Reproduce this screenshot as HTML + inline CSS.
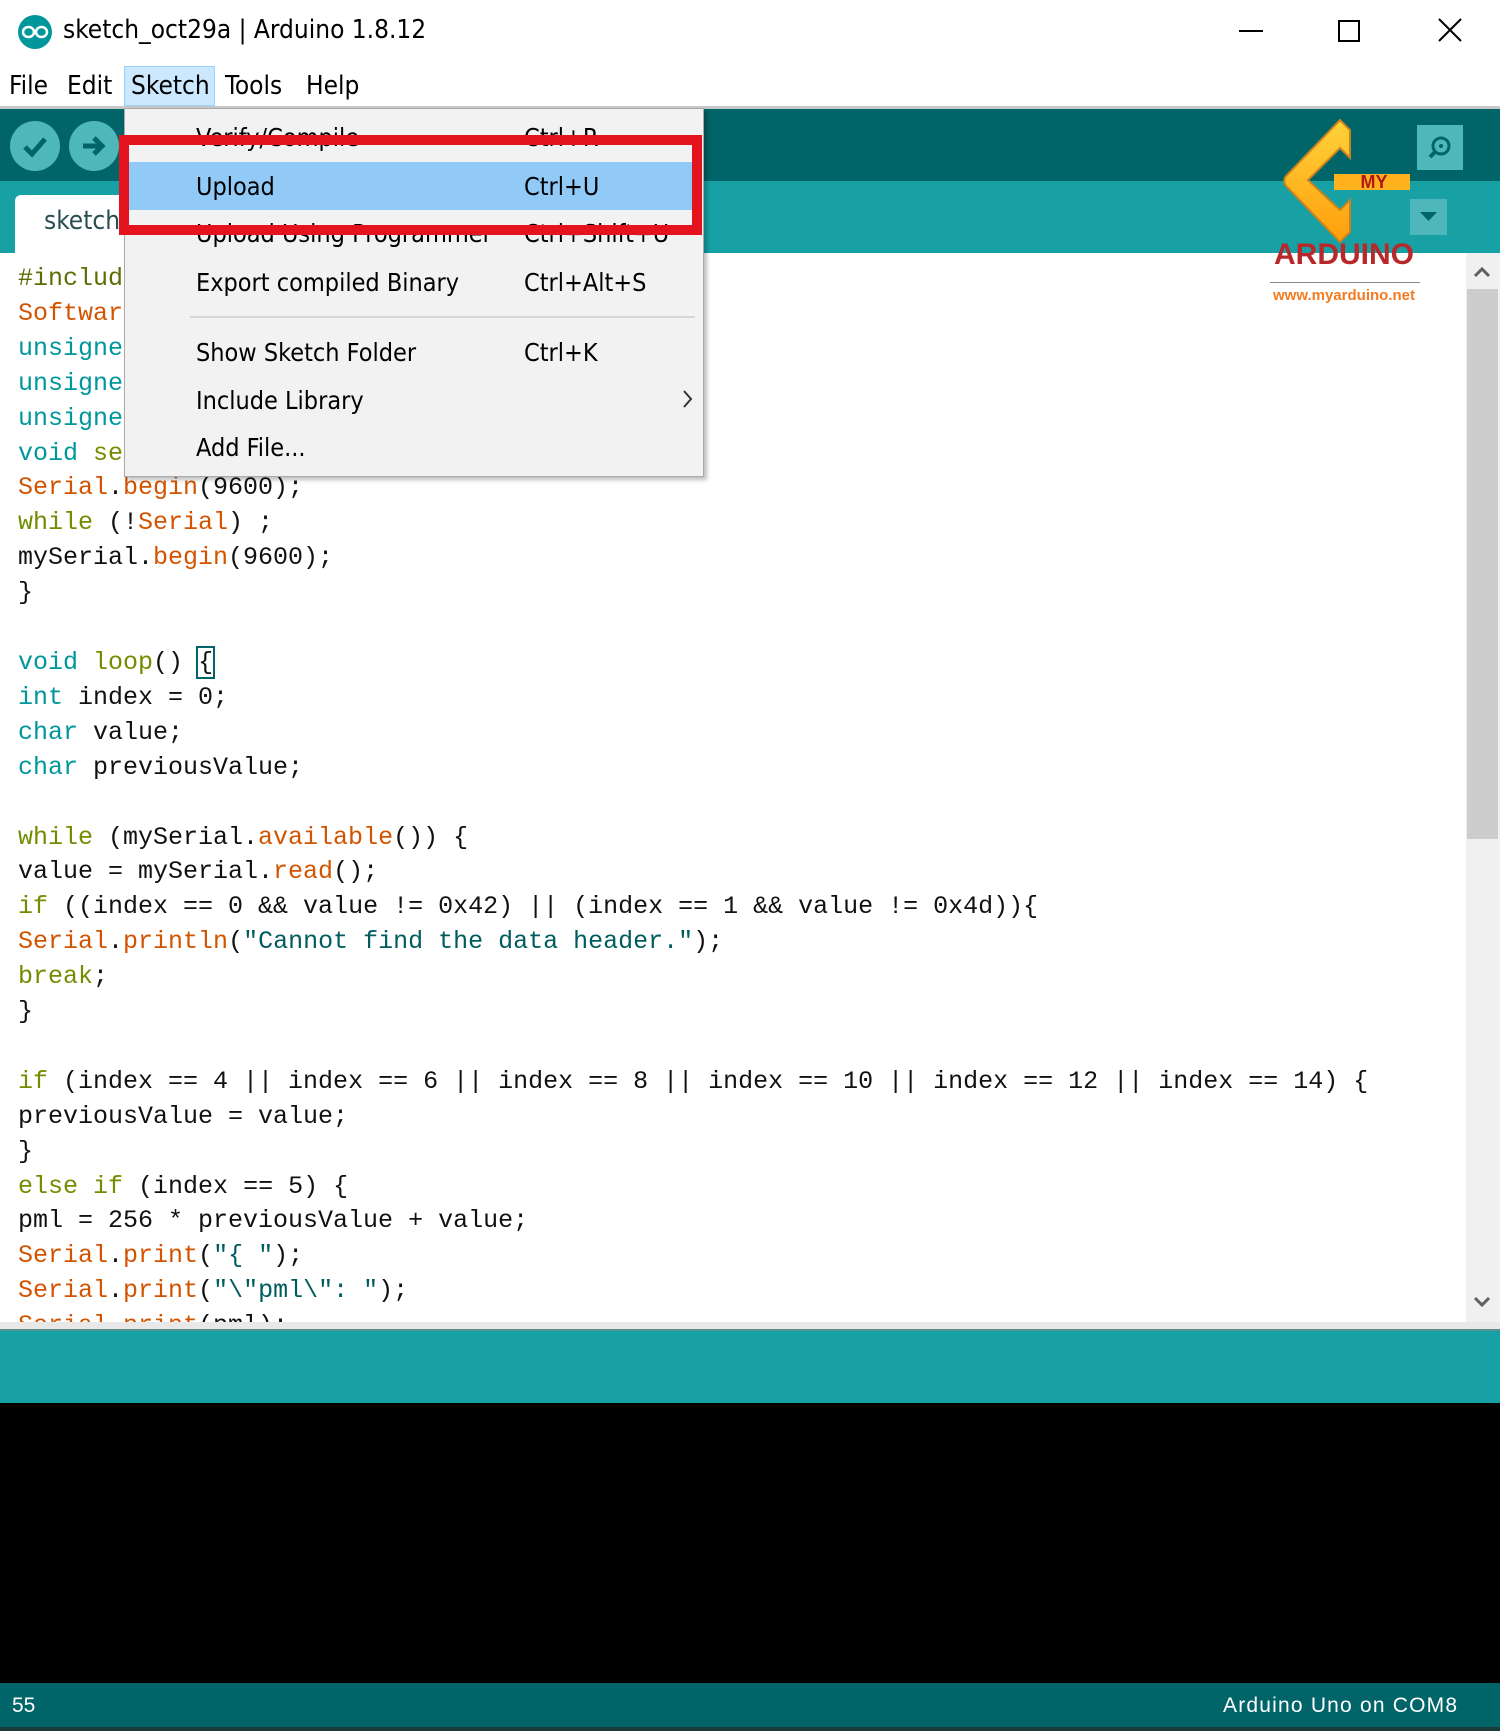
<!DOCTYPE html>
<html><head><meta charset="utf-8"><style>
*{margin:0;padding:0;box-sizing:border-box}
body{width:1500px;height:1731px;position:relative;overflow:hidden;background:#fff;font-family:"Liberation Sans",sans-serif}
.abs{position:absolute}
.ui{font-family:"DejaVu Sans Condensed","Liberation Sans",sans-serif;color:#000}
#code{position:absolute;left:18px;font-family:"Liberation Mono",monospace;font-size:25px;line-height:34.9px;white-space:pre;color:#111}
.k{color:#00979C}.f{color:#D35400}.c{color:#728E00}.p{color:#5E6D03}.s{color:#005C5F}
.mi{position:absolute;left:196px;font-size:25px;font-family:"DejaVu Sans Condensed","Liberation Sans",sans-serif;color:#000}
.sc{position:absolute;left:524px;font-size:25px;font-family:"DejaVu Sans Condensed","Liberation Sans",sans-serif;color:#000}
.mb{position:absolute;top:71px;font-size:26px}
</style></head><body>
<!-- title bar -->
<svg class="abs" style="left:17px;top:14px" width="36" height="36" viewBox="0 0 36 36"><circle cx="18" cy="18" r="17" fill="#00979C"/><ellipse cx="11.5" cy="18" rx="5.5" ry="5" fill="none" stroke="#fff" stroke-width="2.5"/><ellipse cx="24.5" cy="18" rx="5.5" ry="5" fill="none" stroke="#fff" stroke-width="2.5"/></svg>
<div class="abs ui" style="left:63px;top:15px;font-size:26px">sketch_oct29a | Arduino 1.8.12</div>
<div class="abs" style="left:1239px;top:30px;width:24px;height:2px;background:#000"></div>
<div class="abs" style="left:1338px;top:20px;width:22px;height:22px;border:2px solid #000"></div>
<svg class="abs" style="left:1438px;top:18px" width="24" height="24"><path d="M1 1L23 23M23 1L1 23" stroke="#000" stroke-width="2"/></svg>
<!-- menu bar -->
<div class="abs" style="left:124px;top:66px;width:91px;height:40px;background:#cce8ff;border:1px solid #99d1ff"></div>
<div class="mb ui" style="left:9px">File</div>
<div class="mb ui" style="left:67px">Edit</div>
<div class="mb ui" style="left:131px">Sketch</div>
<div class="mb ui" style="left:225px">Tools</div>
<div class="mb ui" style="left:306px">Help</div>
<div class="abs" style="left:0;top:106px;width:1500px;height:3px;background:#c8c8c8"></div>
<!-- toolbar -->
<div class="abs" style="left:0;top:109px;width:1500px;height:72px;background:#006468"></div>
<div class="abs" style="left:10px;top:121px;width:50px;height:50px;border-radius:50%;background:#4db7bb"></div>
<svg class="abs" style="left:10px;top:121px" width="50" height="50"><path d="M15 26l7 7 13-15" stroke="#006468" stroke-width="5" fill="none"/></svg>
<div class="abs" style="left:69px;top:121px;width:50px;height:50px;border-radius:50%;background:#4db7bb"></div>
<svg class="abs" style="left:69px;top:121px" width="50" height="50"><path d="M14 25h18M25 17l8 8-8 8" stroke="#006468" stroke-width="5" fill="none"/></svg>
<div class="abs" style="left:1417px;top:125px;width:46px;height:45px;background:#4db7bb"></div>
<svg class="abs" style="left:1417px;top:125px" width="46" height="45"><circle cx="24" cy="21" r="8" fill="none" stroke="#006468" stroke-width="3"/><circle cx="24" cy="21" r="2" fill="#006468"/><path d="M18 27l-5 5" stroke="#006468" stroke-width="4"/></svg>
<!-- tab bar -->
<div class="abs" style="left:0;top:181px;width:1500px;height:72px;background:#17a1a5"></div>
<div class="abs" style="left:15px;top:195px;width:200px;height:58px;background:#fff;border-radius:6px 6px 0 0"></div>
<div class="abs ui" style="left:44px;top:206px;font-size:26px;color:#2a4f50">sketch_oct29a</div>
<div class="abs" style="left:1410px;top:199px;width:37px;height:36px;background:#4db7bb"></div>
<svg class="abs" style="left:1410px;top:199px" width="37" height="36"><path d="M10 13h17l-8.5 9z" fill="#006468"/></svg>
<!-- editor -->
<div class="abs" style="left:0;top:253px;width:1500px;height:1070px;overflow:hidden">
<div id="code" style="top:9px"><span class="p">#include</span> &lt;<span class="f">SoftwareSerial</span>.h&gt;
<span class="f">SoftwareSerial</span> mySerial(2,3);
<span class="k">unsigned</span> <span class="k">int</span> pm1 = 0;
<span class="k">unsigned</span> <span class="k">int</span> pm2_5 = 0;
<span class="k">unsigned</span> <span class="k">int</span> pm10 = 0;
<span class="k">void</span> <span class="c">setup</span>() {
<span class="f">Serial</span>.<span class="f">begin</span>(9600);
<span class="c">while</span> (!<span class="f">Serial</span>) ;
mySerial.<span class="f">begin</span>(9600);
}

<span class="k">void</span> <span class="c">loop</span>() <span style="outline:2px solid #006468">{</span>
<span class="k">int</span> index = 0;
<span class="k">char</span> value;
<span class="k">char</span> previousValue;

<span class="c">while</span> (mySerial.<span class="f">available</span>()) {
value = mySerial.<span class="f">read</span>();
<span class="c">if</span> ((index == 0 &amp;&amp; value != 0x42) || (index == 1 &amp;&amp; value != 0x4d)){
<span class="f">Serial</span>.<span class="f">println</span>(<span class="s">"Cannot find the data header."</span>);
<span class="c">break</span>;
}

<span class="c">if</span> (index == 4 || index == 6 || index == 8 || index == 10 || index == 12 || index == 14) {
previousValue = value;
}
<span class="c">else</span> <span class="c">if</span> (index == 5) {
pml = 256 * previousValue + value;
<span class="f">Serial</span>.<span class="f">print</span>(<span class="s">"{ "</span>);
<span class="f">Serial</span>.<span class="f">print</span>(<span class="s">"\"pml\": "</span>);
<span class="f">Serial</span>.<span class="f">print</span>(pml);</div>
</div>
<!-- scrollbar -->
<div class="abs" style="left:1466px;top:253px;width:34px;height:1070px;background:#f0f0f0"></div>
<div class="abs" style="left:1467px;top:289px;width:31px;height:550px;background:#cdcdcd"></div>
<svg class="abs" style="left:1472px;top:262px" width="20" height="20"><path d="M3 14l7-7 7 7" stroke="#606060" stroke-width="3" fill="none"/></svg>
<svg class="abs" style="left:1472px;top:1292px" width="20" height="20"><path d="M3 6l7 7 7-7" stroke="#606060" stroke-width="3" fill="none"/></svg>
<div class="abs" style="left:0;top:1322px;width:1500px;height:7px;background:#e8e8e8"></div>
<!-- message area & console -->
<div class="abs" style="left:0;top:1329px;width:1500px;height:74px;background:#17a1a5;border-top:2px solid #5a8f90"></div>
<div class="abs" style="left:0;top:1403px;width:1500px;height:280px;background:#000"></div>
<div class="abs" style="left:0;top:1683px;width:1500px;height:44px;background:#006468"></div>
<div class="abs" style="left:0;top:1727px;width:1500px;height:4px;background:#1a3a3b"></div>
<div class="abs" style="left:12px;top:1694px;font-size:21px;color:#fff">55</div>
<div class="abs" style="left:1223px;top:1694px;font-size:21px;color:#fff;letter-spacing:1.2px">Arduino Uno on COM8</div>
<!-- logo -->
<svg class="abs" style="left:1270px;top:118px" width="160" height="190" viewBox="0 0 160 190">
<defs><linearGradient id="g" x1="0" y1="0" x2="0" y2="1"><stop offset="0" stop-color="#ffd23a"/><stop offset="1" stop-color="#ff9e0c"/></linearGradient></defs>
<path d="M70 2L16 58 a8 8 0 0 0 0 10 L70 124 L80 114 L80 82 L70 92 L38 62 L70 30 L80 40 L80 12z" fill="url(#g)" stroke="#c9821c" stroke-width="2"/>
<rect x="64" y="56" width="76" height="16" fill="#ffb21e"/>
<text x="104" y="70" text-anchor="middle" font-family="Liberation Sans" font-weight="bold" font-size="18" fill="#b01818">MY</text>
<text x="74" y="146" text-anchor="middle" font-family="Liberation Sans" font-weight="bold" font-size="30" fill="#b8282a">ARDUINO</text>
<rect x="0" y="164" width="150" height="1" fill="#888"/>
<text x="74" y="182" text-anchor="middle" font-family="Liberation Sans" font-weight="bold" font-size="15" fill="#f47b20">www.myarduino.net</text>
</svg>
<!-- dropdown menu -->
<div class="abs" style="left:124px;top:108px;width:580px;height:369px;background:#f2f2f2;border:1px solid #aaa;box-shadow:3px 3px 4px rgba(0,0,0,.25)"></div>
<div class="abs" style="left:129px;top:162px;width:566px;height:48px;background:#91c9f7"></div>
<div class="mi" style="top:123px">Verify/Compile</div><div class="sc" style="top:123px">Ctrl+R</div>
<div class="mi" style="top:172px">Upload</div><div class="sc" style="top:172px">Ctrl+U</div>
<div class="mi" style="top:219px">Upload Using Programmer</div><div class="sc" style="top:219px">Ctrl+Shift+U</div>
<div class="mi" style="top:268px">Export compiled Binary</div><div class="sc" style="top:268px">Ctrl+Alt+S</div>
<div class="abs" style="left:190px;top:316px;width:505px;height:2px;background:#d7d7d7"></div>
<div class="mi" style="top:338px">Show Sketch Folder</div><div class="sc" style="top:338px">Ctrl+K</div>
<div class="mi" style="top:386px">Include Library</div>
<svg class="abs" style="left:682px;top:389px" width="12" height="20"><path d="M2 2l7 8-7 8" stroke="#333" stroke-width="2" fill="none"/></svg>
<div class="mi" style="top:433px">Add File...</div>
<!-- red box -->
<div class="abs" style="left:119px;top:135px;width:583px;height:100px;border:10px solid #e3141e"></div>
</body></html>
